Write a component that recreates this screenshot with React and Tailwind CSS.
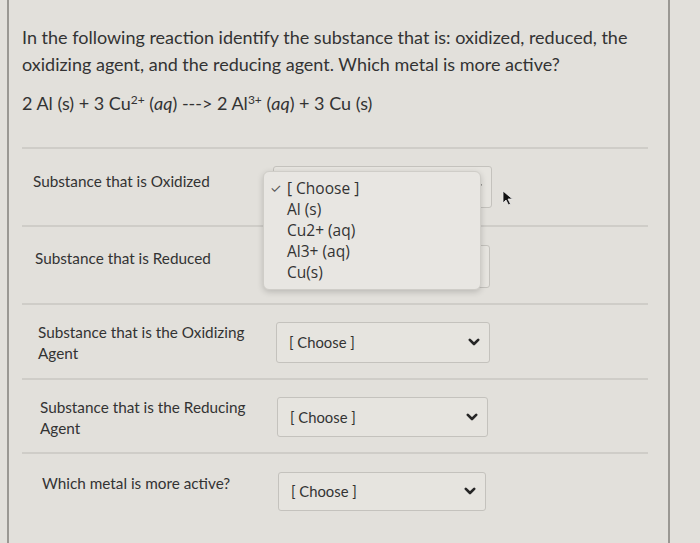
import React from "react";

const Chevron = () => (
  <svg width="12" height="9" viewBox="0 0 12 9" className="shrink-0">
    <path d="M1.8 1.8 L6 6 L10.2 1.8" fill="none" stroke="#262626" strokeWidth="2.6" strokeLinecap="round" strokeLinejoin="round" />
  </svg>
);

const Select = ({ w = "w-[214px]", h = "h-[41px]", ml = "ml-0", text = true }) => (
  <div className={`${w} ${h} ${ml} shrink-0 border border-[#c4c2bd] rounded-[3px] bg-[#e6e4df] flex items-center justify-between pl-[12px] pr-[9px]`}>
    <span className="text-[14.8px] text-[#333]">{text ? "[ Choose ]" : ""}</span>
    <Chevron />
  </div>
);

const Sep = () => <div className="h-[2px] bg-[#cfcdc8] mr-[6px]" />;

export default function App() {
  return (
    <div
      className="w-[700px] h-[543px] bg-[#e2e0db] overflow-hidden relative text-[#333]"
      style={{ fontFamily: "Lato, 'Open Sans', sans-serif" }}
    >
      <div className="ml-[7px] w-[663px] h-full border-l-2 border-r-2 border-[#9a9893] pl-[13px] pr-[14px] pt-[24px]">
        <p className="text-[18px] leading-[27px]">
          In the following reaction identify the substance that is: oxidized, reduced, the oxidizing agent, and the reducing agent. Which metal is more active?
        </p>
        <p className="text-[18px] leading-[27px] mt-[12px]">
          2 Al (s) + 3 Cu<sup className="text-[12px]">2+</sup> (<i>aq</i>) ---&gt; 2 Al<sup className="text-[12px]">3+</sup> (<i>aq</i>) + 3 Cu (s)
        </p>
        <div className="mt-[30px]">
          <Sep />
        </div>

        <div className="h-[76px] flex items-start pt-[17px] pl-[11px]">
          <div className="w-[242px] text-[15.3px] leading-[20px] pt-[5px]">Substance that is Oxidized</div>
          <Select w="w-[219px]" h="h-[42px]" ml="-ml-[2px]" text={false} />
        </div>
        <Sep />
        <div className="h-[76px] flex items-start pt-[18px] pl-[13px]">
          <div className="w-[240px] text-[15.3px] leading-[20px] pt-[3px]">Substance that is Reduced</div>
          <Select w="w-[216px]" h="h-[43px]" ml="-ml-[1px]" text={false} />
        </div>
        <Sep />
        <div className="h-[73px] flex items-start pt-[17px] pl-[16px]">
          <div className="w-[238px] pr-[26px] text-[15.3px] leading-[21px]">Substance that is the Oxidizing Agent</div>
          <Select w="w-[214px]" h="h-[41px]" />
        </div>
        <Sep />
        <div className="h-[72px] flex items-start pt-[17px] pl-[18px]">
          <div className="w-[237px] pr-[26px] text-[15.3px] leading-[21px]">Substance that is the Reducing Agent</div>
          <Select w="w-[211px]" h="h-[40px]" />
        </div>
        <Sep />
        <div className="flex items-start pt-[18px] pl-[20px]">
          <div className="w-[236px] text-[15.3px] leading-[21px] pt-[1px]">Which metal is more active?</div>
          <Select w="w-[208px]" h="h-[39px]" />
        </div>
      </div>

      {/* open dropdown menu */}
      <div
        className="absolute left-[263px] top-[171px] w-[218px] h-[119px] rounded-[6px] bg-[#e8e6e2] border border-[#cfcdc8] shadow-[0_2px_6px_rgba(0,0,0,0.18)] pt-[6px] text-[15.5px] leading-[21px] text-[#333]"
        style={{ fontFamily: "'Open Sans', Inter, sans-serif" }}
      >
        <div className="flex items-center">
          <span className="w-[23px] pl-[6px] text-[13px] text-[#555]">✓</span>
          <span>[ Choose ]</span>
        </div>
        <div className="pl-[23px]">Al (s)</div>
        <div className="pl-[23px]">Cu2+ (aq)</div>
        <div className="pl-[23px]">Al3+ (aq)</div>
        <div className="pl-[23px]">Cu(s)</div>
      </div>

      {/* mouse cursor */}
      <svg className="absolute left-[502px] top-[190px]" width="12" height="16" viewBox="0 0 12 16">
        <path d="M1 1 L1 13 L4 10 L6.5 15 L8.5 14 L6 9 L10.5 9 Z" fill="#111" stroke="#eee" strokeWidth="0.8" />
      </svg>
    </div>
  );
}
